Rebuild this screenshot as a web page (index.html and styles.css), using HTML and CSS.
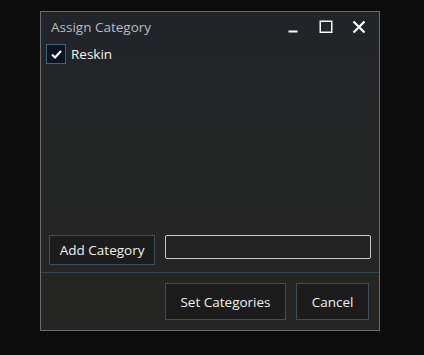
FILE: index.html
```html
<!DOCTYPE html>
<html lang="en">
<head>
  <meta charset="UTF-8" />
  <title>Assign Category</title>
  <link rel="stylesheet" href="styles.css">
</head>
<body>

  <div class="window">
    <div class="titlebar">
      <span class="title">Assign Category</span>
      <div class="controls">
        <span class="ctl"><svg width="12" height="12" viewBox="0 0 12 12"><rect x="1.5" y="9.5" width="9" height="2" fill="#fff"/></svg></span>
        <span class="ctl"><svg width="14" height="14" viewBox="0 0 14 14"><rect x="1.25" y="1.25" width="11.5" height="11" fill="none" stroke="#fff" stroke-width="1.5"/></svg></span>
        <span class="ctl"><svg width="14" height="14" viewBox="0 0 14 14"><path d="M1.5 1.5 L12.5 12.5 M12.5 1.5 L1.5 12.5" stroke="#fff" stroke-width="2.2"/></svg></span>
      </div>
    </div>

    <div class="content">
      <label class="check-row">
        <span class="checkbox"><svg width="11" height="9" viewBox="0 0 11 9"><path d="M1 4.5 L4 7.5 L10 1" fill="none" stroke="#fff" stroke-width="2"/></svg></span>
        Reskin
      </label>

      <div class="add-row">
        <button class="btn add">Add Category</button>
        <input class="field" type="text">
      </div>
    </div>

    <div class="footer">
      <button class="btn big">Set Categories</button>
      <button class="btn big cancel">Cancel</button>
    </div>
  </div>

</body>
</html>
```

FILE: styles.css
```css
body {
  margin: 0;
  background: #0c0c0c;
  font-family: 'Open Sans', sans-serif;
  color: #f0f0f0;
}

.window {
  margin: 11px 0 0 40px;
  width: 338px;
  height: 318px;
  border: 1px solid #6c6c6c;
  display: flex;
  flex-direction: column;
  background: linear-gradient(to bottom, #212429 0%, #242526 35%, #262524 100%);
}

.titlebar {
  height: 32px;
  display: flex;
  align-items: center;
  padding-left: 10px;
}

.title {
  font-size: 13.5px;
  color: #b8bcc1;
  margin-top: -2px;
}

.controls {
  margin-left: auto;
  display: flex;
  align-items: center;
  margin-right: 4px;
}

.ctl {
  width: 33px;
  height: 20px;
  display: flex;
  align-items: center;
  justify-content: center;
  margin-top: -3px;
}

.content {
  flex: 1;
  display: flex;
  flex-direction: column;
  padding: 0 8px 7px 5px;
}

.check-row {
  display: flex;
  align-items: center;
  gap: 5px;
  font-size: 13.5px;
  color: #f4f4f4;
}

.checkbox {
  width: 18px;
  height: 18px;
  border: 1px solid #3e6576;
  background: #0e1422;
  display: flex;
  align-items: center;
  justify-content: center;
}

.add-row {
  margin-top: auto;
  margin-left: 3px;
  display: flex;
  align-items: flex-start;
  gap: 10px;
}

.btn {
  font-family: 'Open Sans', sans-serif;
  font-size: 13.5px;
  color: #f0f0f0;
  background: #1c1c1c;
  border: 1px solid #35525e;
  padding: 0;
}

.add {
  width: 107px;
  height: 30px;
}

.field {
  width: 201px;
  height: 22px;
  margin: 0;
  padding: 0 2px;
  border: 1px solid #c9c9c9;
  border-radius: 2px;
  background: #232323;
  color: #f0f0f0;
}

.footer {
  border-top: 1px solid #2e4752;
  display: flex;
  justify-content: flex-end;
  gap: 10px;
  padding: 10px 10px 0 0;
  height: 47px;
}

.big {
  width: 121px;
  height: 37px;
}

.cancel {
  width: 73px;
}
```
